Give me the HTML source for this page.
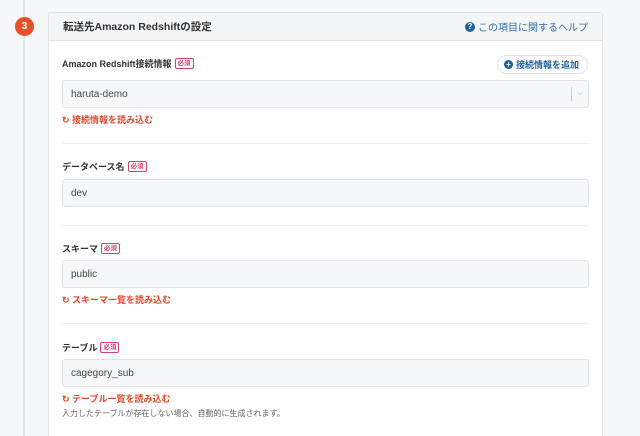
<!DOCTYPE html>
<html><head><meta charset="utf-8"><style>
*{box-sizing:border-box;margin:0;padding:0}
html,body{width:640px;height:436px;overflow:hidden}
body{background:#f6f7f8;font-family:"Liberation Sans","Noto Sans CJK JP",sans-serif;position:relative;color:#333}
.vl{position:absolute;left:23px;top:0;width:2px;height:436px;background:#e3e5e8}
.num{position:absolute;left:15px;top:17px;width:19px;height:19px;border-radius:50%;background:#e8502a;color:#fff;font-size:10px;font-weight:bold;text-align:center;line-height:19px}
.panel{position:absolute;left:48px;top:12px;width:555px;height:430px;background:#fff;border:1px solid #e2e4e7;border-radius:3px}
.hd{height:28px;background:#f4f5f7;border-bottom:1px solid #e2e4e7;padding:0 14px;font-size:10.5px;font-weight:bold;display:flex;align-items:center;color:#333;position:relative}
.help{position:absolute;right:14px;top:0;height:27px;display:flex;align-items:center;font-weight:normal;color:#2e6fb0;font-size:10px}
.q{display:inline-block;width:10px;height:10px;border-radius:50%;background:#1f5f9e;color:#fff;font-size:8px;line-height:10px;text-align:center;font-weight:bold;margin-right:3px}
.lbl{position:absolute;left:13px;font-size:9px;font-weight:bold;color:#333;display:flex;align-items:center;height:12px}
.req{display:inline-block;border:1px solid #d6426a;color:#d6426a;font-size:6.5px;padding:0 2px;line-height:9px;border-radius:2px;margin-left:3px;font-weight:bold}
.inp{position:absolute;left:13px;width:527px;height:28px;background:#f6f7f8;border:1px solid #e0e2e5;border-radius:3px;font-size:10px;display:flex;align-items:center;padding-left:8px;color:#444}
.lnk{position:absolute;left:13px;font-size:9px;color:#e0472a;font-weight:bold;height:12px;display:flex;align-items:center}
.sep{position:absolute;left:13px;width:527px;height:1px;background:#eceef0}
.btn{position:absolute;right:14px;top:42px;height:19px;padding:0 8px 0 6px;border:1px solid #dfe2e6;border-radius:10px;font-size:9px;font-weight:bold;color:#1f5f9e;display:flex;align-items:center;background:#fff}
.plus{display:inline-block;width:9px;height:9px;border-radius:50%;background:#1f5f9e;color:#fff;font-size:8px;line-height:9px;text-align:center;margin-right:3px}
.note{position:absolute;left:13px;font-size:8px;color:#666}
</style></head><body>
<div class="vl"></div>
<div class="num">3</div>
<div class="panel">
<div class="hd">転送先Amazon Redshiftの設定<span class="help"><span class="q">?</span>この項目に関するヘルプ</span></div>
<div class="lbl" style="top:44px">Amazon Redshift接続情報<span class="req">必須</span></div>
<div class="btn"><span class="plus">+</span>接続情報を追加</div>
<div class="inp" style="top:67px">haruta-demo<span style="position:absolute;right:16px;top:6px;width:1px;height:14px;background:#ccc"></span><span style="position:absolute;right:5px;top:7px;color:#bbb;font-size:8px">⌵</span></div>
<div class="lnk" style="top:100px">↻ 接続情報を読み込む</div>
<div class="sep" style="top:130px"></div>
<div class="lbl" style="top:147px">データベース名<span class="req">必須</span></div>
<div class="inp" style="top:166px">dev</div>
<div class="sep" style="top:212px"></div>
<div class="lbl" style="top:229px">スキーマ<span class="req">必須</span></div>
<div class="inp" style="top:247px">public</div>
<div class="lnk" style="top:280px">↻ スキーマ一覧を読み込む</div>
<div class="sep" style="top:310px"></div>
<div class="lbl" style="top:328px">テーブル<span class="req">必須</span></div>
<div class="inp" style="top:346px">cagegory_sub</div>
<div class="lnk" style="top:379px">↻ テーブル一覧を読み込む</div>
<div class="note" style="top:395px">入力したテーブルが存在しない場合、自動的に生成されます。</div>
</div>
</body></html>
